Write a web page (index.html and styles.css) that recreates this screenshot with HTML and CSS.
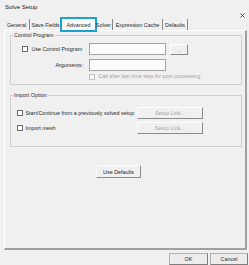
FILE: index.html
```html
<!DOCTYPE html>
<html>
<head>
<meta charset="utf-8">
<link rel="stylesheet" href="styles.css">
</head>
<body>
<div class="window">
  <div class="titlebar">
    <span class="title">Solve Setup</span>
    <svg class="close" width="5" height="5" viewBox="0 0 5 5"><path d="M0.5 0.5 L4.5 4.5 M4.5 0.5 L0.5 4.5" stroke="#3a3a3a" stroke-width="0.8" fill="none"/></svg>
  </div>
  <div class="tabs">
    <div class="tab t-general">General</div>
    <div class="tab t-save">Save Fields</div>
    <div class="tab t-adv selected">Advanced</div>
    <div class="tab t-solver">Solver</div>
    <div class="tab t-cache">Expression Cache</div>
    <div class="tab t-def">Defaults</div>
  </div>
  <div class="page">
    <fieldset class="group g1">
      <legend>Control Program</legend>
      <div class="content c1">
        <div class="row r1">
          <label class="check"><span class="box"></span>Use Control Program</label>
          <div class="input"></div>
          <div class="btn dots">...</div>
        </div>
        <div class="row r2">
          <span class="lbl">Arguments:</span>
          <div class="input"></div>
        </div>
        <div class="row r3">
          <label class="check disabled"><span class="box"></span>Call after last time step for post processing</label>
        </div>
      </div>
    </fieldset>
    <fieldset class="group g2">
      <legend>Import Option</legend>
      <div class="content c2">
        <div class="row2 q1">
          <label class="check"><span class="box"></span>Start/Continue from a previously solved setup</label>
          <div class="btn link">Setup Link...</div>
        </div>
        <div class="row2 q2">
          <label class="check"><span class="box"></span>Import mesh</label>
          <div class="btn link">Setup Link...</div>
        </div>
      </div>
    </fieldset>
    <div class="btn defaults">Use Defaults</div>
  </div>
  <div class="footer">
    <div class="btn dlg ok">OK</div>
    <div class="btn dlg cancel">Cancel</div>
  </div>
</div>
</body>
</html>
```
FILE: styles.css
```css
* { box-sizing: border-box; }
html, body { margin: 0; padding: 0; }
body {
  width: 249px;
  height: 265px;
  overflow: hidden;
  background: #f0f0f0;
  font-family: "Liberation Sans", Arial, sans-serif;
  font-size: 5.4px;
  color: #2a2a2a;
}
.window { width: 249px; height: 265px; }

.titlebar {
  height: 17px;
  display: flex;
  justify-content: space-between;
  align-items: flex-start;
}
.title {
  font-size: 6px;
  line-height: 8px;
  margin-top: 3px;
  padding-left: 5px;
  color: #222;
}
.close { margin-top: 12.5px; margin-right: 4px; display: block; }

.tabs {
  height: 13px;
  display: flex;
  padding-left: 4px;
  padding-top: 2px;
}
.tab {
  height: 11px;
  display: flex;
  align-items: center;
  justify-content: center;
  border-right: 1px solid #8a8a8a;
  white-space: nowrap;
}
.t-general { width: 26px; }
.t-save { width: 32px; }
.t-adv { width: 33px; border-right: none; }
.t-solver { width: 18px; }
.t-cache { width: 50px; }
.t-def { width: 25px; }
.selected {
  background: #fafafa;
  outline: 2px solid #1aa3cc;
}

.page {
  height: 220px;
  margin: 0 2px 0 4px;
  border-top: 1px solid #ffffff;
  border-left: 1px solid #ffffff;
  border-right: 2px solid #a0a0a0;
  border-bottom: 2px solid #a0a0a0;
  padding: 0 3px 0 5px;
}

.group {
  margin: 0;
  padding: 0;
  border: 1px solid #d0d0d0;
  min-width: 0;
}
.group legend {
  padding: 0 1px;
  margin-left: 2px;
  line-height: 7px;
  height: 7px;
  color: #2a2a2a;
}
.g1 { margin-top: 1px; }
.g2 { margin-top: 7px; }

.c1 { padding: 4px 0 4px 11px; }
.c2 { padding: 8px 0 12px 6px; }

.row {
  display: grid;
  grid-template-columns: 63px 77px 18px;
  column-gap: 4px;
  align-items: center;
}
.r1, .r2 { height: 12px; }
.r2 { margin-top: 4px; }
.r3 { margin-top: 2px; height: 7px; }
.r3 .check { grid-column: 2 / 4; }

.row2 {
  display: grid;
  grid-template-columns: 120px 66px;
  height: 12px;
  align-items: center;
}
.q2 { margin-top: 3px; }

.check {
  display: flex;
  align-items: center;
  white-space: nowrap;
  line-height: 7px;
}
.box {
  width: 6px;
  height: 6px;
  border: 1px solid #6a6a6a;
  background: #fff;
  margin-right: 3.5px;
  flex: none;
}
.c2 .box { margin-right: 2.5px; }
.disabled { color: #a3a3a3; }
.disabled .box { border-color: #c2c2c2; background: #f7f7f7; }

.lbl { text-align: right; padding-right: 2px; }

.input {
  height: 12px;
  border: 1px solid #a4a4a4;
  background: #fbfbfb;
}

.btn {
  display: flex;
  align-items: center;
  justify-content: center;
  background: #f0f0f0;
  border: 1px solid;
  border-color: #fdfdfd #8a8a8a #8a8a8a #fdfdfd;
  white-space: nowrap;
}
.dots { height: 11px; align-self: start; margin-top: 1px; color: #777; }
.link { height: 12px; color: #a3a3a3; }
.defaults {
  width: 45px;
  height: 13px;
  margin-top: 18px;
  margin-left: 86px;
  color: #222;
}

.footer {
  display: flex;
  justify-content: flex-end;
  gap: 2px;
  padding-top: 3px;
  padding-right: 1px;
}
.dlg {
  height: 12px;
  background: #ececec;
  border-color: #b0b0b0 #7d7d7d #7d7d7d #b0b0b0;
}
.ok { width: 39px; }
.cancel { width: 38px; }
```
